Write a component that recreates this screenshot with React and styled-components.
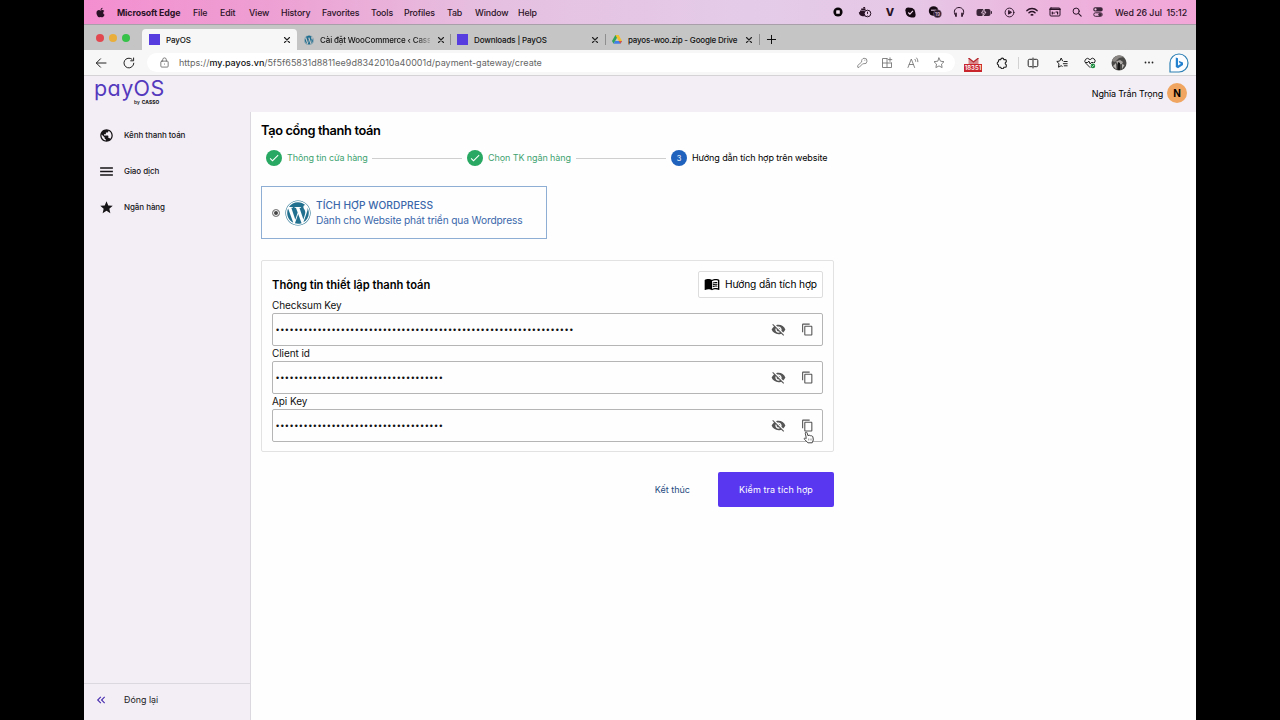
import React from 'react';
import styled, { createGlobalStyle } from 'styled-components';
import { FaApple, FaWordpress } from 'react-icons/fa';
import {
  MdPublic,
  MdMenu,
  MdStar,
  MdVisibilityOff,
  MdContentCopy,
  MdCheck,
  MdMenuBook,
  MdKeyboardDoubleArrowLeft,
} from 'react-icons/md';

const GlobalStyle = createGlobalStyle`
  * {
    box-sizing: border-box;
  }

  body {
    margin: 0;
    background-color: #000;
    font-family: Inter, 'Liberation Sans', sans-serif;
    overflow: hidden;
  }

  svg {
    display: block;
    flex-shrink: 0;
  }
`;

const Desktop = styled.div`
  width: 1112px;
  height: 720px;
  margin: 0 84px;
  display: flex;
  flex-direction: column;
  background-color: #fefefe;
  overflow: hidden;
`;

/* macOS menu bar */
const MenuBar = styled.nav`
  height: 24px;
  flex-shrink: 0;
  display: flex;
  align-items: center;
  color: #2a1226;
  background: linear-gradient(
    90deg,
    #f48fd0 0%,
    #ee9dd2 15%,
    #e6bfe0 36%,
    #e4cce8 60%,
    #e6c6e6 75%,
    #eeb0dc 90%,
    #f2a6d8 100%
  );
`;

const MenuItem = styled.span`
  width: ${({ $w }) => $w}px;
  flex-shrink: 0;
  font-size: 8.8px;
  font-weight: ${({ $bold }) => ($bold ? 700 : 500)};
  letter-spacing: ${({ $ls }) => $ls || 0}px;
  white-space: pre;
`;

const Clock = styled(MenuItem)`
  padding-left: 9px;
`;

const Slot = styled.span`
  width: ${({ $w }) => $w}px;
  height: 100%;
  flex-shrink: 0;
  display: flex;
  align-items: center;
  justify-content: center;
  color: ${({ $color }) => $color || 'inherit'};
`;

const Spacer = styled.span`
  flex: 1;
`;

const VLetter = styled.span`
  font-size: 11px;
  font-weight: 800;
`;

/* browser chrome */
const TabStrip = styled.div`
  height: 26px;
  flex-shrink: 0;
  display: flex;
  align-items: flex-end;
  background-color: #c5c5c5;
  border-top: 1px solid #a99fab;
`;

const TrafficLights = styled.div`
  width: 58px;
  height: 25px;
  padding: 0 0 0 12px;
  display: flex;
  align-items: center;
  gap: 5px;
`;

const Light = styled.span`
  width: 8px;
  height: 8px;
  border-radius: 50%;
  background-color: ${({ color }) => color};
`;

const Tab = styled.div`
  width: ${({ $w }) => $w}px;
  height: 21px;
  padding: 0 ${({ $end = 5 }) => $end}px 0 ${({ $pad = 7 }) => $pad}px;
  display: flex;
  align-items: center;
  gap: ${({ $gap = 6 }) => $gap}px;
  border-radius: 4px 4px 0 0;
  background-color: ${({ $active }) => ($active ? '#f6f7f6' : 'transparent')};
`;

const TabTitle = styled.span`
  flex: 1;
  overflow: hidden;
  font-size: 8px;
  font-weight: 500;
  letter-spacing: ${({ $ls }) => $ls || 0}px;
  white-space: nowrap;
  color: #111;
  ${({ $fade }) =>
    $fade && 'mask-image: linear-gradient(90deg, #000 86%, transparent 104%);'}
`;

const Divider = styled.span`
  width: 1px;
  height: ${({ $h }) => $h}px;
  background-color: ${({ color }) => color};
`;

const TabDivider = styled(Divider)`
  margin-bottom: 5px;
`;

const PurpleSquare = styled.span`
  width: 11px;
  height: 11px;
  flex-shrink: 0;
  background-color: #573ce0;
`;

const NewTab = styled.span`
  width: 22px;
  height: 21px;
  display: flex;
  align-items: center;
  justify-content: center;
`;

const Toolbar = styled.div`
  height: 26px;
  flex-shrink: 0;
  display: flex;
  align-items: center;
  color: #222;
  background-color: #f7f7f7;
  border-bottom: 1px solid #d5d3d6;
`;

const AddressBar = styled.div`
  width: 808px;
  height: 19px;
  padding: 0 4px 0 8px;
  display: flex;
  align-items: center;
  border-radius: 10px;
  background-color: #fff;
`;

const Url = styled.span`
  margin-left: 6px;
  flex: 1;
  font-size: 9px;
  letter-spacing: 0.02px;
  color: #666;
  white-space: nowrap;

  b {
    font-weight: 500;
    color: #111;
  }
`;

const MailBadge = styled.span`
  width: 18px;
  height: 8px;
  font-size: 6px;
  line-height: 8px;
  font-weight: 600;
  text-align: center;
  color: #fff;
  background-color: #c9252d;
`;

const MailStack = styled.span`
  padding-top: 4px;
  display: flex;
  flex-direction: column;
  align-items: center;
`;

/* application */
const AppHeader = styled.header`
  height: 36px;
  flex-shrink: 0;
  padding: 0 9px 0 10px;
  display: flex;
  justify-content: space-between;
  background-color: #f3eef6;
`;

const Logo = styled.div`
  width: 69px;
  display: flex;
  flex-direction: column;
`;

const LogoName = styled.span`
  height: 23px;
  font-size: 21.5px;
  line-height: 25px;
  font-weight: 400;
  font-feature-settings: 'cv11' 1;
  letter-spacing: 0.4px;
  color: #5439bd;
  white-space: nowrap;
`;

const LogoBy = styled.span`
  padding-left: 40px;
  font-size: 4.8px;
  line-height: 6px;
  font-weight: 600;
  color: #222;
  white-space: nowrap;
`;

const LogoBrand = styled.span`
  margin-left: 2px;
  font-weight: 800;
  letter-spacing: 0.1px;
`;

const User = styled.div`
  height: 34px;
  display: flex;
  align-items: center;
  gap: 4px;
  font-size: 9px;
  letter-spacing: -0.16px;
  color: #000;
`;

const Avatar = styled.span`
  width: 20px;
  height: 20px;
  display: flex;
  align-items: center;
  justify-content: center;
  border-radius: 50%;
  font-size: 10px;
  font-weight: 700;
  background-color: #f0a661;
`;

const Body = styled.div`
  flex: 1;
  display: flex;
  min-height: 0;
`;

const Sidebar = styled.aside`
  width: 167px;
  flex-shrink: 0;
  padding-top: 5px;
  display: flex;
  flex-direction: column;
  background-color: #f3eef6;
  border-right: 1px solid #dcd8e0;
`;

const NavItem = styled.a`
  height: 36px;
  padding-left: 14px;
  display: flex;
  align-items: center;
  gap: 10px;
  font-size: 8px;
  font-weight: 500;
  letter-spacing: -0.07px;
  color: #161416;
`;

const NavIcon = styled.span`
  width: 16px;
  display: flex;
  justify-content: center;
`;

const Collapse = styled.div`
  height: 37px;
  margin-top: auto;
  padding: 0 0 5px 10px;
  display: flex;
  align-items: center;
  gap: 16px;
  border-top: 1px solid #dcd8e0;
  font-size: 8.9px;
  color: #222;
`;

const Main = styled.main`
  width: 583px;
  padding: 11px 0 0 10px;
`;

const PageTitle = styled.h1`
  margin: 0;
  font-size: 12.8px;
  line-height: 16px;
  font-weight: 600;
  letter-spacing: -0.36px;
  color: #000;
`;

const Stepper = styled.div`
  height: 16px;
  margin-top: 11px;
  padding-left: 5px;
  display: flex;
  align-items: center;
`;

const StepMark = styled.span`
  width: 16px;
  height: 16px;
  flex-shrink: 0;
  display: flex;
  align-items: center;
  justify-content: center;
  border-radius: 50%;
  font-size: 7.5px;
  color: #fff;
  background-color: ${({ color }) => color};
`;

const StepLabel = styled.span`
  width: ${({ $w }) => $w}px;
  margin-left: 5px;
  padding-bottom: 1px;
  font-size: 9px;
  letter-spacing: -0.09px;
  white-space: nowrap;
  color: ${({ color }) => color};
`;

const StepLine = styled.span`
  width: 90px;
  height: 1px;
  margin: 0 5px;
  background-color: #cfcfcf;
`;

const PluginCard = styled.div`
  width: 286px;
  height: 53px;
  margin-top: 20px;
  padding-left: 10px;
  display: flex;
  align-items: center;
  border: 1px solid #8eaed3;
  color: #3b68ab;
`;

const Radio = styled.span`
  width: 8px;
  height: 8px;
  border: 1px solid #888;
  border-radius: 50%;
  background-color: #444;
  box-shadow: inset 0 0 0 1px #fff;
`;

const PluginLogo = styled.span`
  margin: 0 5px;
  color: #21708f;
`;

const PluginText = styled.div`
  padding-top: 1px;
  font-size: 10.2px;
  line-height: 15.5px;
  letter-spacing: -0.14px;

  strong {
    display: block;
    font-weight: 500;
    letter-spacing: 0.05px;
  }
`;

const Panel = styled.section`
  width: 573px;
  height: 192px;
  margin-top: 21px;
  padding: 10px 10px 0;
  border: 1px solid #e2e2e2;
  border-radius: 2px;
`;

const PanelHead = styled.div`
  height: 26px;
  display: flex;
  align-items: center;
  justify-content: space-between;
`;

const PanelTitle = styled.h2`
  margin: 0;
  padding-top: 2px;
  font-size: 11.2px;
  font-weight: 600;
  color: #000;
`;

const GuideButton = styled.button`
  width: 125px;
  height: 27px;
  padding: 0 0 0 5px;
  display: flex;
  align-items: center;
  gap: 5px;
  border: 1px solid #ddd;
  border-radius: 2px;
  font: 400 10.2px Inter, sans-serif;
  letter-spacing: -0.14px;
  white-space: nowrap;
  color: #000;
  background-color: #fff;
`;

const Field = styled.label`
  display: block;
  height: 48px;
  padding-top: 1px;
  font-size: 10px;
  line-height: 15px;
  letter-spacing: -0.08px;
  color: #111;
`;

const FieldBox = styled.span`
  height: 33px;
  padding: 0 8px 1px 3px;
  display: flex;
  align-items: center;
  border: 1px solid #b5b5b5;
  border-radius: 2px;
  color: #555;
`;

const Secret = styled.span`
  flex: 1;
  padding-top: 2px;
  font-family: 'Liberation Sans', sans-serif;
  font-size: 9px;
  letter-spacing: 1.51px;
  color: #111;
`;

const IconSpot = styled.span`
  position: relative;
  margin-left: 15px;
`;

const Pointer = styled.svg`
  position: absolute;
  left: 2px;
  top: 12px;
`;

const Actions = styled.div`
  margin-top: 20px;
  display: flex;
  align-items: center;
  justify-content: flex-end;
  gap: 28px;
`;

const FinishLink = styled.a`
  font-size: 9px;
  color: #1f4a80;
`;

const PrimaryButton = styled.button`
  width: 116px;
  height: 35px;
  padding: 0;
  border: 0;
  border-radius: 2px;
  font: 400 9px Inter, sans-serif;
  letter-spacing: 0.1px;
  color: #fff;
  background-color: #5937f0;
`;

function Stroke({ size = 12, box = 12, width = 1, children, ...rest }) {
  return (
    <svg
      width={size}
      height={size}
      viewBox={`0 0 ${box} ${box}`}
      fill="none"
      stroke="currentColor"
      strokeWidth={width}
      strokeLinecap="round"
      strokeLinejoin="round"
      {...rest}
    >
      {children}
    </svg>
  );
}

const CloseIcon = () => (
  <Stroke size={10} box={10} width={1.1} color="#222">
    <path d="M2.5 2.5l5 5M7.5 2.5l-5 5" />
  </Stroke>
);

const DriveIcon = () => (
  <svg width="10" height="9" viewBox="0 0 10 9">
    <path d="M3.4 0h3.2L3.2 6 1.6 8.8 0 6z" fill="#2fa35c" />
    <path d="M3.4 0h3.2L10 6H6.8z" fill="#f4bd2a" />
    <path d="M3.2 6H10L8.4 8.8H1.6z" fill="#3f7fe8" />
    <path d="M6.8 6H10L8.4 8.8z" fill="#dc5242" />
  </svg>
);

const STAR = 'M6 1l1.5 3.2 3.5.5-2.5 2.4.6 3.5L6 8.9l-3.1 1.7.6-3.5L1 4.7l3.5-.5z';

const menus = [
  ['File', 27],
  ['Edit', 29],
  ['View', 32],
  ['History', 41],
  ['Favorites', 49],
  ['Tools', 33],
  ['Profiles', 43],
  ['Tab', 28],
  ['Window', 43],
  ['Help', 30],
];

const fields = [
  { label: 'Checksum Key', length: 64 },
  { label: 'Client id', length: 36 },
  { label: 'Api Key', length: 36, hovered: true },
];

function SystemMenu() {
  return (
    <MenuBar>
      <Slot $w={33}>
        <FaApple size={11} />
      </Slot>
      <MenuItem $w={76} $bold $ls={-0.12}>
        Microsoft Edge
      </MenuItem>
      {menus.map(([name, w]) => (
        <MenuItem key={name} $w={w} $ls={-0.13}>
          {name}
        </MenuItem>
      ))}
      <Spacer />
      <Slot $w={24}>
        <svg width="10" height="10" viewBox="0 0 10 10">
          <circle cx="5" cy="5" r="4.6" fill="#0b0509" />
          <rect x="3.2" y="3.2" width="3.6" height="3.6" rx=".6" fill="#f4dff0" />
        </svg>
      </Slot>
      <Slot $w={30}>
        <svg width="14" height="12" viewBox="0 0 14 12">
          <path
            d="M.8 6.200c1 .3 1.300-.6 1.300-1.700h6v5.700H4.500C2.200 10 1 8.500.8 6.200zM3.200 2.600h4.300v1.500H3.200zM5.300.9h1.800v1.300H5.300z"
            fill="#2a1226"
          />
          <circle cx="9.500" cy="7.500" r="3.300" fill="#e8cce8" stroke="#2a1226" />
          <path d="M9.500 5.700v2.200M9.500 9v.4" stroke="#2a1226" />
        </svg>
      </Slot>
      <Slot $w={20}>
        <VLetter>V</VLetter>
      </Slot>
      <Slot $w={20}>
        <svg width="11" height="11" viewBox="0 0 11 11">
          <circle cx="5.500" cy="5.500" r="4.700" fill="#150a13" />
          <circle cx="3.300" cy="3.300" r="2.900" fill="#150a13" />
          <circle cx="7.700" cy="7.700" r="2.900" fill="#150a13" />
          <path d="M3.300 5.500l1.600 1.600 3-3.200" fill="none" stroke="#f0d4ec" strokeWidth="1.200" />
        </svg>
      </Slot>
      <Slot $w={30}>
        <svg width="14" height="12" viewBox="0 0 14 12">
          <circle cx="5.600" cy="5" r="4.800" fill="#150a13" />
          <path d="M3 4.200h5" stroke="#e8cce8" />
          <circle cx="9.500" cy="7.700" r="4" fill="#2c1a2a" stroke="#a88ba8" strokeWidth=".4" />
          <text x="9.500" y="9.600" fontSize="5" textAnchor="middle" fill="#f0d4ec">
            19
          </text>
        </svg>
      </Slot>
      <Slot $w={18}>
        <Stroke size={12}>
          <path d="M2.500 9.500C-.5 5 2.500 1.500 6 1.500S12.500 5 9.500 9.500" />
          <path d="M3 7.300v3M9 7.300v3" strokeWidth="1.600" />
        </Stroke>
      </Slot>
      <Slot $w={32}>
        <svg width="17" height="9" viewBox="0 0 17 9">
          <rect x=".5" y="1" width="14" height="7" rx="2" fill="#3a2437" />
          <path d="M15.500 3.200v2.600" stroke="#3a2437" />
          <path
            d="M8.500 0L5.500 5h2L6.500 9l3.500-5H8z"
            fill="#3a2437"
            stroke="#f0d0ea"
            strokeWidth=".8"
          />
        </svg>
      </Slot>
      <Slot $w={18}>
        <Stroke size={11}>
          <circle cx="6" cy="6" r="4.800" />
          <path d="M5 4.200v3.600L7.900 6z" fill="currentColor" />
        </Stroke>
      </Slot>
      <Slot $w={28}>
        <Stroke size={12} width={1.5}>
          <path d="M1 4.600a7 7 0 0110 0M3 6.800a4.300 4.300 0 016 0M5.300 8.900a1 1 0 011.400 0" />
        </Stroke>
      </Slot>
      <Slot $w={18}>
        <Stroke size={12}>
          <rect x="1" y="2" width="10" height="8" rx="1" />
          <path d="M1 3.300h10" strokeWidth="1.500" />
          <path d="M3.300 6v2M4.600 7h.8M7 6h1.600v2" strokeWidth="1.200" />
        </Stroke>
      </Slot>
      <Slot $w={26}>
        <Stroke size={10}>
          <circle cx="5" cy="5" r="3.700" strokeWidth="1.200" />
          <path d="M8 8l3 3" strokeWidth="1.300" />
        </Stroke>
      </Slot>
      <Slot $w={16}>
        <svg width="10" height="10" viewBox="0 0 10 10">
          <rect x=".3" y=".3" width="9.400" height="4.200" rx="1.800" fill="#3a2437" />
          <circle cx="2.500" cy="2.400" r="1.100" fill="#f0c0e2" />
          <rect x=".8" y="5.800" width="8.400" height="3.500" rx="1.600" fill="none" stroke="#3a2437" />
          <circle cx="7" cy="7.600" r="1.700" fill="#3a2437" />
        </svg>
      </Slot>
      <Clock $w={90} $ls={-0.04}>
        {'Wed 26 Jul  15:12'}
      </Clock>
    </MenuBar>
  );
}

function Tabs() {
  return (
    <TabStrip>
      <TrafficLights>
        <Light color="#e2484f" />
        <Light color="#e9ae3a" />
        <Light color="#36c149" />
      </TrafficLights>
      <Tab $w={155} $active>
        <PurpleSquare />
        <TabTitle $ls={-0.1}>PayOS</TabTitle>
        <CloseIcon />
      </Tab>
      <Tab $w={153} $end={4}>
        <FaWordpress size={10} color="#1d6c8e" />
        <TabTitle $fade $ls={-0.13}>
          Cài đặt WooCommerce ‹ Cass
        </TabTitle>
        <CloseIcon />
      </Tab>
      <TabDivider $h={11} color="#8e8e8e" />
      <Tab $w={154} $pad={6}>
        <PurpleSquare />
        <TabTitle $ls={-0.13}>Downloads | PayOS</TabTitle>
        <CloseIcon />
      </Tab>
      <TabDivider $h={11} color="#8e8e8e" />
      <Tab $w={153} $pad={6}>
        <DriveIcon />
        <TabTitle $ls={-0.18}>payos-woo.zip - Google Drive</TabTitle>
        <CloseIcon />
      </Tab>
      <TabDivider $h={11} color="#8e8e8e" />
      <NewTab>
        <Stroke size={11}>
          <path d="M6 1.500v9M1.500 6h9" />
        </Stroke>
      </NewTab>
    </TabStrip>
  );
}

function BrowserToolbar() {
  return (
    <Toolbar>
      <Slot $w={34}>
        <Stroke size={12}>
          <path d="M11 6H1.500M5.500 1.800L1.300 6l4.200 4.200" />
        </Stroke>
      </Slot>
      <Slot $w={22}>
        <Stroke size={12}>
          <path d="M10.800 6.200A4.900 4.900 0 119 2.200M10.600 1v2.800H7.700" />
        </Stroke>
      </Slot>
      <Slot $w={7} />
      <AddressBar>
        <Slot $w={18} $color="#666">
          <Stroke size={11} width={0.9}>
            <rect x="2" y="4.500" width="8" height="6.500" rx="1" />
            <path d="M4 4.500V3a2 2 0 014 0v1.500M6 7.600v.2" />
          </Stroke>
        </Slot>
        <Url>
          https://<b>my.payos.vn</b>
          /5f5f65831d8811ee9d8342010a40001d/payment-gateway/create
        </Url>
        <Slot $w={26} $color="#777">
          <Stroke size={11} width={0.9}>
            <path d="M5 5a3 3 0 112.300 2.300L6.200 7.400l-4 4-1.400-.2V9.700z" />
            <path d="M8.500 3.500h.1" />
          </Stroke>
        </Slot>
        <Slot $w={24} $color="#777">
          <Stroke size={12} width={0.9}>
            <path d="M6 1.500H1.500v9h9V6M6 1.500V10.500M1.500 6h9M9 .8v3.600M7.200 2.600h3.600" />
          </Stroke>
        </Slot>
        <Slot $w={28} $color="#777">
          <Stroke size={12} width={0.9}>
            <path d="M1 10.500l3.300-8.500 3.300 8.500M2.200 7.500h4.200M8 2.300a3 3 0 01.7 2M9.700 1a5 5 0 011.200 3.700" />
          </Stroke>
        </Slot>
        <Slot $w={24} $color="#777">
          <Stroke size={12} width={0.9}>
            <path d={STAR} />
          </Stroke>
        </Slot>
      </AddressBar>
      <Slot $w={36}>
        <MailStack>
          <svg width="11" height="6" viewBox="0 0 11 6">
            <path d="M.5 0v6h10V0l-5 4z" fill="#d9898c" />
            <path d="M.5 0l5 4 5-4" fill="none" stroke="#b3262c" strokeWidth="1.300" />
          </svg>
          <MailBadge>18351</MailBadge>
        </MailStack>
      </Slot>
      <Slot $w={22}>
        <Stroke size={12} width={1.1}>
          <path d="M3.500 2.600h1.300a1.500 1.500 0 013 0h1.500a1 1 0 011 1v1.300a1.500 1.500 0 000 2.900v1.400a1 1 0 01-1 1H7.800a1.500 1.500 0 01-3 0H3.500a1.200 1.200 0 01-1-1.200V8a1.700 1.700 0 010-3.300V3.800a1.200 1.200 0 011-1.200z" />
        </Stroke>
      </Slot>
      <Slot $w={10}>
        <Divider $h={12} color="#d2d2d2" />
      </Slot>
      <Slot $w={20}>
        <Stroke size={12}>
          <path d="M5 2.300H2.500a1.300 1.300 0 00-1.300 1.300v4.800a1.300 1.300 0 001.300 1.300H5M7 2.300h2.500a1.300 1.300 0 011.300 1.300v4.800a1.300 1.300 0 01-1.300 1.300H7M6 1v10" />
        </Stroke>
      </Slot>
      <Slot $w={38}>
        <Stroke size={12}>
          <path d="M6.500 3.800L5.200 1 3.800 4 .8 4.500 3 6.700l-.5 3.500 2.700-1.500 1 .6M8 4.500h3.200M7.300 6.700h3.900M8.200 8.800h3" />
        </Stroke>
      </Slot>
      <Slot $w={18}>
        <Stroke size={12}>
          <path d="M6 10.500L1.700 6.100A2.600 2.600 0 015.400 2.200L6 3l.6-.8a2.600 2.600 0 013.900 3.500M1.800 5.500h2l1-1.500L6.200 7l1-1.500h2" />
          <circle cx="8.900" cy="8.900" r="2.300" fill="#198a3c" stroke="none" />
          <path d="M7.900 9l.7.700 1.300-1.500" stroke="#fff" strokeWidth=".7" />
        </Stroke>
      </Slot>
      <Slot $w={40}>
        <svg width="16" height="16" viewBox="0 0 16 16">
          <circle cx="8" cy="8" r="7.500" fill="#4b4947" />
          <path d="M1 6a7.500 7.500 0 0112-4L8 3 4 7z" fill="#898684" />
          <path d="M5 6.500l4-1.500 3 2-1 2-4 .5z" fill="#aaa6a3" />
          <path d="M7 7l2 1v7H6.500z" fill="#171616" />
          <path d="M2 11l3-3 .5 6.500zM11 9l2.500 1-2.500 4z" fill="#b9b6b4" />
        </svg>
      </Slot>
      <Slot $w={20}>
        <svg width="10" height="3" viewBox="0 0 10 3">
          <circle cx="1.500" cy="1.500" r=".9" fill="#222" />
          <circle cx="5" cy="1.500" r=".9" fill="#222" />
          <circle cx="8.500" cy="1.500" r=".9" fill="#222" />
        </svg>
      </Slot>
      <Slot $w={3} />
      <Slot $w={34}>
        <svg width="20" height="20" viewBox="0 0 20 20">
          <path d="M1 19V10a9 9 0 119 9z" fill="#fbfdff" stroke="#2c7fb4" strokeWidth="1.200" />
          <path
            d="M6.800 4.500l2.200.8v7.200l3-1.700-1.500-.7-.9-2.300 4.400 1.600v2.500L9 15.200l-2.200-1.300z"
            fill="#2481d0"
          />
        </svg>
      </Slot>
    </Toolbar>
  );
}

export default function App() {
  return (
    <Desktop>
      <GlobalStyle />
      <SystemMenu />
      <Tabs />
      <BrowserToolbar />
      <AppHeader>
        <Logo>
          <LogoName>payOS</LogoName>
          <LogoBy>
            by<LogoBrand>CASSO</LogoBrand>
          </LogoBy>
        </Logo>
        <User>
          Nghĩa Trần Trọng
          <Avatar>N</Avatar>
        </User>
      </AppHeader>
      <Body>
        <Sidebar>
          <NavItem>
            <NavIcon>
              <MdPublic size={15} />
            </NavIcon>
            Kênh thanh toán
          </NavItem>
          <NavItem>
            <NavIcon>
              <MdMenu size={17} />
            </NavIcon>
            Giao dịch
          </NavItem>
          <NavItem>
            <NavIcon>
              <MdStar size={15} />
            </NavIcon>
            Ngân hàng
          </NavItem>
          <Collapse>
            <MdKeyboardDoubleArrowLeft size={14} color="#4a2fae" />
            Đóng lại
          </Collapse>
        </Sidebar>
        <Main>
          <PageTitle>Tạo cổng thanh toán</PageTitle>
          <Stepper>
            <StepMark color="#28a862">
              <MdCheck size={12} />
            </StepMark>
            <StepLabel $w={80} color="#3fa371">
              Thông tin cửa hàng
            </StepLabel>
            <StepLine />
            <StepMark color="#28a862">
              <MdCheck size={12} />
            </StepMark>
            <StepLabel $w={83} color="#3fa371">
              Chọn TK ngân hàng
            </StepLabel>
            <StepLine />
            <StepMark color="#1f62bd">3</StepMark>
            <StepLabel $w={137} color="#000">
              Hướng dẫn tích hợp trên website
            </StepLabel>
          </Stepper>
          <PluginCard>
            <Radio />
            <PluginLogo>
              <FaWordpress size={26} />
            </PluginLogo>
            <PluginText>
              <strong>TÍCH HỢP WORDPRESS</strong>
              Dành cho Website phát triển qua Wordpress
            </PluginText>
          </PluginCard>
          <Panel>
            <PanelHead>
              <PanelTitle>Thông tin thiết lập thanh toán</PanelTitle>
              <GuideButton>
                <MdMenuBook size={16} />
                Hướng dẫn tích hợp
              </GuideButton>
            </PanelHead>
            {fields.map(({ label, length, hovered }) => (
              <Field key={label}>
                {label}
                <FieldBox>
                  <Secret>{'•'.repeat(length)}</Secret>
                  <MdVisibilityOff size={15} />
                  <IconSpot>
                    <MdContentCopy size={13} />
                    {hovered && (
                      <Pointer width="12" height="13" viewBox="0 0 12 13">
                        <path
                          d="M3.200 6.500L2.300 2.300c-.2-1.300 1.400-1.600 1.800-.4l.8 2.700 1.300-.4 1.200.5 1.200.1 1.200.8.6 3.200-1.200 3H5L1.300 8.200c-.5-1 .7-1.600 1.900-.6z"
                          fill="#fff"
                          stroke="#333"
                          strokeWidth=".9"
                        />
                        <path
                          d="M5.500 7.500v2M7.200 7.500v2M8.800 7.500v2"
                          stroke="#777"
                          strokeWidth=".6"
                        />
                      </Pointer>
                    )}
                  </IconSpot>
                </FieldBox>
              </Field>
            ))}
          </Panel>
          <Actions>
            <FinishLink>Kết thúc</FinishLink>
            <PrimaryButton>Kiểm tra tích hợp</PrimaryButton>
          </Actions>
        </Main>
      </Body>
    </Desktop>
  );
}
